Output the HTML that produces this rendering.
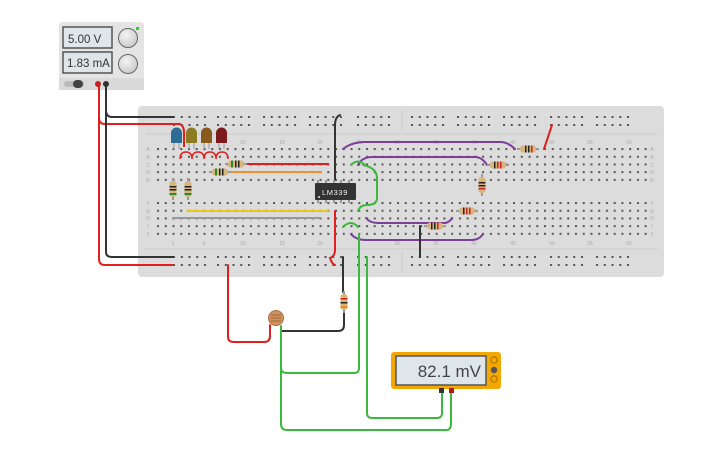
<!DOCTYPE html>
<html><head><meta charset="utf-8"><style>
html,body{margin:0;padding:0;background:#fff;width:725px;height:453px;overflow:hidden}
svg{display:block}
text{font-family:"Liberation Sans",sans-serif}
</style></head><body>
<svg width="725" height="453" viewBox="0 0 725 453" xmlns="http://www.w3.org/2000/svg">
<defs>
<pattern id="pm" patternUnits="userSpaceOnUse" x="154.13" y="145.15" width="7.74" height="7.7"><rect x="2.9" y="2.9" width="2" height="2" fill="#555"/></pattern>
<pattern id="pm2" patternUnits="userSpaceOnUse" x="154.13" y="199.15" width="7.74" height="7.7"><rect x="2.9" y="2.9" width="2" height="2" fill="#555"/></pattern>
<pattern id="pr" patternUnits="userSpaceOnUse" x="-3.87" y="0" width="7.74" height="8"><rect x="2.9" y="3" width="2" height="2" fill="#555"/></pattern>
<radialGradient id="kn" cx="0.4" cy="0.35" r="0.7"><stop offset="0" stop-color="#f4f4f4"/><stop offset="1" stop-color="#c8c8c8"/></radialGradient>
<g id="rg"><rect x="-3.87" y="0" width="38.7" height="16" fill="url(#pr)"/></g>
<g id="res"><rect x="-11" y="-1" width="22" height="2" fill="#999"/><rect x="-8" y="-3.5" width="16" height="7" rx="3" fill="#d8b57a"/></g>
</defs>
<!-- breadboard -->
<rect x="138" y="106" width="526" height="171" rx="4" fill="#dcdcdc"/>
<line x1="145" y1="134" x2="658" y2="134" stroke="#ccc"/>
<line x1="145" y1="249" x2="658" y2="249" stroke="#ccc"/>
<line x1="402" y1="110" x2="402" y2="131" stroke="#ccc"/>
<line x1="402" y1="251" x2="402" y2="272" stroke="#ccc"/>
<rect x="154.13" y="145.15" width="495" height="38.5" fill="url(#pm)"/>
<rect x="154.13" y="199.15" width="495" height="38.5" fill="url(#pm2)"/>
<g transform="translate(0,113)">
<use href="#rg" x="174"/><use href="#rg" x="218"/><use href="#rg" x="264"/><use href="#rg" x="310"/><use href="#rg" x="358"/><use href="#rg" x="412"/><use href="#rg" x="458"/><use href="#rg" x="504"/><use href="#rg" x="551"/><use href="#rg" x="597"/></g>
<g transform="translate(0,253)">
<use href="#rg" x="174"/><use href="#rg" x="218"/><use href="#rg" x="264"/><use href="#rg" x="310"/><use href="#rg" x="358"/><use href="#rg" x="412"/><use href="#rg" x="458"/><use href="#rg" x="504"/><use href="#rg" x="551"/><use href="#rg" x="597"/></g>
<g font-size="5" fill="#aaa" text-anchor="middle">
<text x="243" y="144">10</text><text x="282" y="144">15</text><text x="320" y="144">20</text><text x="359" y="144">25</text><text x="397" y="144">30</text><text x="436" y="144">35</text><text x="474" y="144">40</text><text x="513" y="144">45</text><text x="552" y="144">50</text><text x="590" y="144">55</text><text x="629" y="144">60</text>
<text x="173" y="245">1</text><text x="204" y="245">5</text><text x="243" y="245">10</text><text x="282" y="245">15</text><text x="320" y="245">20</text><text x="397" y="245">30</text><text x="436" y="245">35</text><text x="474" y="245">40</text><text x="513" y="245">45</text><text x="552" y="245">50</text><text x="590" y="245">55</text><text x="629" y="245">60</text>
<text x="148" y="151">A</text><text x="148" y="159">B</text><text x="148" y="167">C</text><text x="148" y="174">D</text><text x="148" y="182">E</text><text x="148" y="205">F</text><text x="148" y="213">G</text><text x="148" y="220">H</text><text x="148" y="228">I</text><text x="148" y="236">J</text>
<text x="652" y="151">A</text><text x="652" y="159">B</text><text x="652" y="167">C</text><text x="652" y="174">D</text><text x="652" y="182">E</text><text x="652" y="205">F</text><text x="652" y="213">G</text><text x="652" y="220">H</text><text x="652" y="228">I</text><text x="652" y="236">J</text>
</g>
<!-- power supply -->
<rect x="59" y="22" width="85" height="68" rx="3" fill="#e4e4e4"/>
<rect x="63" y="27" width="49" height="21" fill="#dfe6ea" stroke="#555" stroke-width="1.5"/>
<rect x="63" y="52" width="49" height="21" fill="#dfe6ea" stroke="#555" stroke-width="1.5"/>
<text x="68" y="43" font-size="11.5" fill="#333">5.00 V</text>
<text x="67" y="67" font-size="11.5" fill="#333">1.83 mA</text>
<circle cx="128" cy="38" r="9.5" fill="url(#kn)" stroke="#666"/>
<circle cx="128" cy="64" r="9.5" fill="url(#kn)" stroke="#666"/>
<rect x="136" y="27" width="3" height="3" fill="#3c3"/>
<rect x="59" y="78" width="85" height="12" fill="#dadada"/>
<rect x="64" y="81" width="20" height="6" rx="3" fill="#bbb"/><rect x="73" y="80" width="10" height="8" rx="4" fill="#444"/>
<!-- supply wires -->
<g fill="none" stroke-width="2">
<path d="M99 84 V259 Q99 265 105 265 H174" stroke="#e0201e"/>
<path d="M99 118 Q99 124 105 124 H180 Q184 126 184 132 V147" stroke="#e0201e"/>
<path d="M106 84 V252 Q106 257 112 257 H174" stroke="#333"/>
<path d="M106 110 Q106 117 112 117 H174" stroke="#333"/>
</g>
<circle cx="98" cy="84" r="3" fill="#c81e1e"/><circle cx="106" cy="84" r="3" fill="#333"/>
<!-- LEDs -->
<g stroke="#999" stroke-width="1"><path d="M174 142V149M179 142V149M189 142V149M194 142V149M204 142V149M209 142V149M219 142V149M224 142V149"/></g>
<path d="M171 143V133a5.5 5.5 0 0 1 11 0V143z" fill="#2e6b95"/>
<path d="M186 143V133a5.5 5.5 0 0 1 11 0V143z" fill="#8c7b20"/>
<path d="M201 143V133a5.5 5.5 0 0 1 11 0V143z" fill="#8a5a1c"/>
<path d="M216 143V133a5.5 5.5 0 0 1 11 0V143z" fill="#7d1a1a"/>
<path d="M180 159Q180 152 186 152Q192 152 192 159Q192 152 198 152Q204 152 204 159Q204 152 210 152Q216 152 216 159Q216 152 222 152Q228 152 228 159" fill="none" stroke="#e0201e" stroke-width="1.5"/>
<!-- wires on board -->
<g fill="none" stroke-width="2" stroke-linecap="round">
<path d="M246 164 H328" stroke="#e0201e"/>
<path d="M231 172 H321" stroke="#f0902a"/>
<path d="M187 211 H328" stroke="#e8c820"/>
<path d="M173 218 H320" stroke="#999"/>
<path d="M335 180 V125 Q335 117 340 115" stroke="#333"/>
<path d="M343 149 Q352 142 365 142 H500 Q508 142 515 149" stroke="#7b3f99"/>
<path d="M358 165 Q362 157 372 157 H475 Q482 157 487 165" stroke="#7b3f99"/>
<path d="M366 218 Q370 223 378 223 H445 Q450 222 452 218" stroke="#7b3f99"/>
<path d="M351 234 Q356 240 366 240 H472 Q479 240 483 234" stroke="#7b3f99"/>
<path d="M351 165 Q358 158 365 165" stroke="#3cb83c"/>
<path d="M363 165 Q377 168 377 178 V198 Q377 205 367 205 Q360 205 358 211" stroke="#3cb83c"/>
<path d="M343 227 Q351 219 358 227" stroke="#3cb83c"/>
<path d="M544 149 L552 125" stroke="#e0201e"/>
<path d="M420 226 V257" stroke="#333"/>
<path d="M335 211 V250 Q335 256 330 258 Q332 264 335 265" stroke="#e0201e"/>
<path d="M343 257 V292" stroke="#333"/>
<path d="M344 312 V325 Q344 331 338 331 H282" stroke="#333"/>
<path d="M228 265 V337 Q228 342 234 342 H264 Q270 342 270 336 V325" stroke="#e0201e"/>
<path d="M359 234 V368 Q359 373 354 373 H287 Q281 373 281 368 V326" stroke="#3cb83c"/>
<path d="M367 257 V413 Q367 418 372 418 H437 Q442 418 442 413 V390" stroke="#3cb83c"/>
<path d="M281 360 V424 Q281 430 287 430 H446 Q451 430 451 424 V390" stroke="#3cb83c"/>
</g>
<!-- chip -->
<g fill="#999"><rect x="317" y="180" width="2" height="4"/><rect x="325" y="180" width="2" height="4"/><rect x="333" y="180" width="2" height="4"/><rect x="340" y="180" width="2" height="4"/><rect x="348" y="180" width="2" height="4"/>
<rect x="317" y="199" width="2" height="4"/><rect x="325" y="199" width="2" height="4"/><rect x="333" y="199" width="2" height="4"/><rect x="340" y="199" width="2" height="4"/><rect x="348" y="199" width="2" height="4"/></g>
<rect x="315" y="183" width="41" height="17" rx="1" fill="#333"/>
<text x="335" y="195" font-size="7.5" fill="#eee" text-anchor="middle" letter-spacing="0.6">LM339</text>
<circle cx="319" cy="197" r="1" fill="#eee"/>
<!-- resistors -->
<g><use href="#res" x="236" y="164"/><use href="#res" x="220" y="172"/><use href="#res" x="528" y="149"/><use href="#res" x="498" y="165"/><use href="#res" x="467" y="211"/><use href="#res" x="435" y="226"/>
<use href="#res" transform="translate(173,189) rotate(90)"/><use href="#res" transform="translate(188,189) rotate(90)"/><use href="#res" transform="translate(482,185) rotate(90)"/><use href="#res" transform="translate(344,302) rotate(90)"/></g>
<g fill="#222"><rect x="231" y="160.5" width="2" height="7" fill="#2a8a2a"/><rect x="235" y="160.5" width="1.5" height="7"/><rect x="238" y="160.5" width="1.5" height="7"/>
<rect x="215" y="168.5" width="2" height="7" fill="#2a8a2a"/><rect x="219" y="168.5" width="1.5" height="7"/><rect x="222" y="168.5" width="1.5" height="7"/>
<rect x="525" y="145.5" width="1.5" height="7"/><rect x="528" y="145.5" width="1.5" height="7"/><rect x="531" y="145.5" width="1.5" height="7" fill="#c22"/>
<rect x="494" y="161.5" width="1.5" height="7"/><rect x="497" y="161.5" width="1.5" height="7" fill="#c22"/><rect x="500" y="161.5" width="1.5" height="7" fill="#c22"/>
<rect x="463" y="207.5" width="1.5" height="7"/><rect x="466" y="207.5" width="1.5" height="7" fill="#c22"/><rect x="469" y="207.5" width="1.5" height="7" fill="#c22"/>
<rect x="431" y="222.5" width="1.5" height="7"/><rect x="434" y="222.5" width="1.5" height="7"/><rect x="437" y="222.5" width="1.5" height="7" fill="#c22"/>
<rect x="169.5" y="186" width="7" height="1.5"/><rect x="169.5" y="189" width="7" height="1.5"/><rect x="169.5" y="193" width="7" height="2" fill="#2a8a2a"/>
<rect x="184.5" y="186" width="7" height="1.5"/><rect x="184.5" y="189" width="7" height="1.5"/><rect x="184.5" y="193" width="7" height="2" fill="#2a8a2a"/>
<rect x="478.5" y="182" width="7" height="1.5"/><rect x="478.5" y="185" width="7" height="1.5"/><rect x="478.5" y="188" width="7" height="1.5" fill="#c22"/>
<rect x="340.5" y="298" width="7" height="1.5" fill="#c22"/><rect x="340.5" y="302" width="7" height="1.5"/><rect x="340.5" y="306" width="7" height="2" fill="#e88a1a"/></g>
<!-- LDR -->
<circle cx="276" cy="318" r="7.5" fill="#d09060" stroke="#b07040"/>
<path d="M271 315H281M271 318H281M271 321H281" stroke="#8a5a30" stroke-width="0.7"/>
<!-- multimeter -->
<rect x="391" y="352" width="110" height="37" rx="3" fill="#f2a800"/>
<rect x="396" y="356" width="90" height="29" fill="#dfe6ea" stroke="#555" stroke-width="1.5"/>
<text x="481" y="377" font-size="17" fill="#444" text-anchor="end">82.1 mV</text>
<circle cx="494" cy="360" r="3.2" fill="none" stroke="#8a6000" stroke-width="0.8"/>
<circle cx="494" cy="370" r="3.2" fill="#555"/>
<circle cx="494" cy="379" r="3.2" fill="none" stroke="#8a6000" stroke-width="0.8"/>
<rect x="439" y="388" width="5" height="5" fill="#333"/><rect x="449" y="388" width="5" height="5" fill="#b01818"/>
</svg>
</body></html>
